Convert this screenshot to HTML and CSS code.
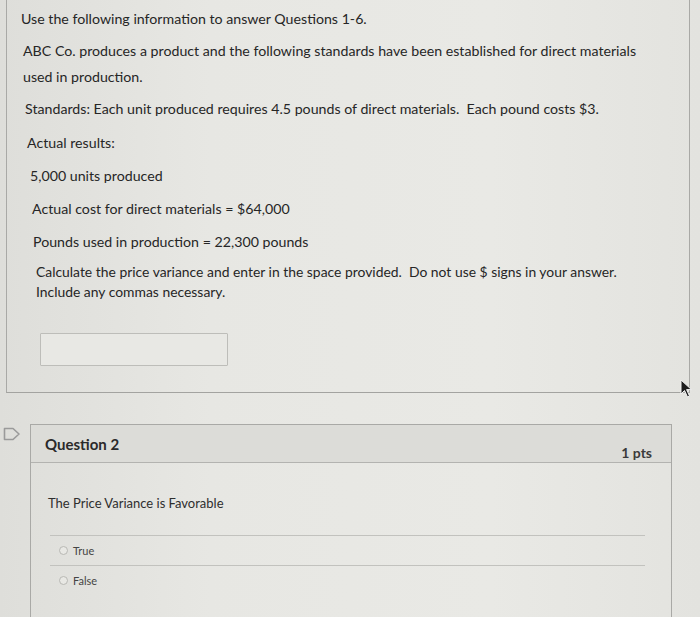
FILE: index.html
```html
<!DOCTYPE html>
<html lang="en">
<head>
<meta charset="utf-8">
<title>Quiz</title>
<link rel="stylesheet" href="styles.css">
</head>
<body>
<div class="page">
  <section class="q1">
    <p class="p-intro">Use the following information to answer Questions 1-6.</p>
    <p class="p-abc">ABC Co. produces a product and the following standards have been established for direct materials used in production.</p>
    <p class="p-std">Standards: Each unit produced requires 4.5 pounds of direct materials.&nbsp; Each pound costs $3.</p>
    <p class="p-act">Actual results:</p>
    <p class="p-units">5,000 units produced</p>
    <p class="p-cost">Actual cost for direct materials = $64,000</p>
    <p class="p-lbs">Pounds used in production = 22,300 pounds</p>
    <p class="p-calc">Calculate the price variance and enter in the space provided.&nbsp; Do not use $ signs in your answer.<br>Include any commas necessary.</p>
    <div class="answer-row"><input class="answer" type="text" aria-label="answer"></div>
  </section>

  <div class="q2-wrap">
    <svg class="flag" width="18" height="14" viewBox="0 0 18 14" aria-hidden="true">
      <path d="M1.5 1.5 H10 L16 7 L10 12.5 H1.5 Z" fill="none" stroke="#9a9a9a" stroke-width="1.6" stroke-linejoin="round"/>
    </svg>
    <section class="q2">
      <header class="q2-head">
        <span class="q2-title">Question 2</span>
        <span class="q2-pts">1 pts</span>
      </header>
      <div class="q2-body">
        <p class="q2-text">The Price Variance is Favorable</p>
        <ul class="opts">
          <li class="opt"><span class="radio"></span>True</li>
          <li class="opt"><span class="radio"></span>False</li>
        </ul>
      </div>
    </section>
  </div>
  <svg class="cursor" width="14" height="20" viewBox="0 0 14 20" aria-hidden="true">
    <path d="M1 1 L1 15 L4.5 11.5 L7.5 18 L9.5 17 L6.6 10.6 L11.5 10.6 Z" fill="#1e1e1e" stroke="#f2f2f2" stroke-width="1"/>
  </svg>
</div>
</body>
</html>
```

FILE: styles.css
```css
* { box-sizing: border-box; }
html, body {
  margin: 0;
  padding: 0;
  background: #e5e5e1;
}
body {
  font-family: Lato, "Open Sans", "Liberation Sans", sans-serif;
  color: #262626;
}
.page {
  position: relative;
  width: 700px;
  height: 617px;
  overflow: hidden;
  background: linear-gradient(90deg, #dededa 0%, #e7e7e3 30%, #e9e9e5 70%, #e3e3df 100%);
}
.q1 {
  margin-left: 6px;
  width: 684px;
  height: 393px;
  border-left: 1px solid #a9a9a6;
  border-right: 1px solid #a9a9a6;
  border-bottom: 1px solid #a3a3a0;
  padding: 6px 0 0 14px;
}
.q1 p {
  margin: 0;
  font-size: 14.2px;
  line-height: 26px;
}
.p-intro { margin-bottom: 6px !important; }
.p-abc { padding-left: 2px; max-width: 640px; margin-bottom: 6px !important; }
.p-std { padding-left: 4px; margin-bottom: 8px !important; }
.p-act { padding-left: 6px; margin-bottom: 7px !important; }
.p-units { padding-left: 9px; margin-bottom: 7px !important; }
.p-cost { padding-left: 11px; margin-bottom: 7px !important; }
.p-lbs { padding-left: 12px; margin-bottom: 7px !important; }
.q1 .p-calc { padding-left: 15px; line-height: 20px; margin-top: 2px; font-size: 13.9px; }
.answer-row {
  padding: 31px 0 0 19px;
}
.answer {
  display: block;
  width: 188px;
  height: 33px;
  border: 1.5px solid #bdbdb9;
  background: #e8e8e4;
  border-radius: 1px;
}
.q2-wrap {
  display: flex;
  align-items: flex-start;
  margin-top: 31px;
  padding-left: 3px;
}
.flag {
  margin-top: 3px;
  flex: none;
}
.q2 {
  margin-left: 9px;
  width: 642px;
  height: 200px;
  border: 1px solid #a9a9a6;
}
.q2-head {
  display: flex;
  justify-content: space-between;
  align-items: center;
  height: 38px;
  padding: 0 19px 0 14px;
  background: #dcdcd8;
  border-bottom: 1px solid #b3b3b0;
}
.q2-title {
  font-size: 15px;
  font-weight: 700;
  color: #2a2a2a;
}
.q2-pts {
  font-size: 14px;
  font-weight: 700;
  color: #3a3a3a;
  margin-top: 18px;
}
.q2-body {
  padding: 32px 26px 0 17px;
}
.q2-text {
  margin: 0;
  font-size: 13px;
  color: #2e2e2e;
}
.opts {
  list-style: none;
  margin: 24px 0 0 0;
  padding: 0 0 0 2px;
}
.opt {
  display: flex;
  align-items: center;
  height: 30px;
  font-size: 11px;
  color: #444;
  border-top: 1px solid #c2c2be;
  padding-left: 9px;
}
.radio {
  width: 9px;
  height: 9px;
  border-radius: 50%;
  border: 1px solid #b8b8b4;
  background: #e8e8e4;
  margin-right: 5px;
}
.cursor {
  position: absolute;
  left: 680px;
  top: 379px;
}
```
